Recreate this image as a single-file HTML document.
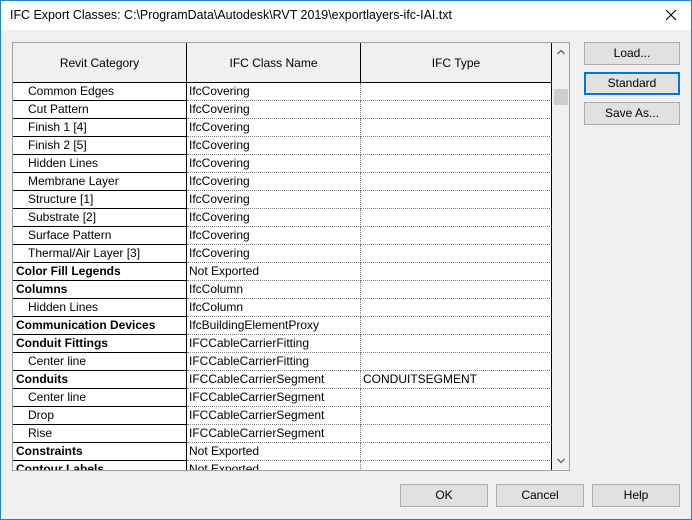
<!DOCTYPE html>
<html><head><meta charset="utf-8"><style>
*{margin:0;padding:0;box-sizing:border-box}
body{width:692px;height:520px;overflow:hidden;font-family:"Liberation Sans",Tahoma,sans-serif;font-size:12px;color:#000;background:#f0f0f0;position:relative}
.frame{position:absolute;left:0;top:0;width:692px;height:520px;border:1px solid #1883d7;}
.title{position:absolute;left:1px;top:1px;width:690px;height:29px;background:#fff;}
.title span{position:absolute;left:9px;top:7px;font-size:12.45px}
.close{position:absolute;left:662px;top:6px;width:16px;height:16px}
.grid{position:absolute;left:12px;top:42px;width:558px;height:429px;border:1px solid #a0a0a0;background:#fff;overflow:hidden}
.hdr{position:absolute;top:0;height:40px;border-right:1px solid #000;border-bottom:1px solid #000;background:#f0f0f0;text-align:center;line-height:40px}
.row{position:absolute;left:0;height:18px;width:539px}
.c{position:absolute;top:0;height:18px;line-height:17px;white-space:nowrap;overflow:hidden}
.c1{left:0;width:174px;background:#fff;border-bottom:1px solid #000;border-right:1px solid #000;padding-left:3px}
.c1.sub{padding-left:15px}
.c1.b{font-weight:bold}
.c2{left:174px;width:174px;border-bottom:1px dotted #808080;border-right:1px dotted #808080;padding-left:2px}
.c3{left:348px;width:191px;border-bottom:1px dotted #808080;border-right:1px solid #000;padding-left:2px}
.sb{position:absolute;left:539px;top:0;width:18px;height:427px;background:#f0f0f0}
.thumb{position:absolute;left:2px;top:46px;width:14px;height:16px;background:#cdcdcd}
.btn{position:absolute;height:23px;background:#e1e1e1;border:1px solid #adadad;text-align:center;line-height:21px}
.btn.f{border:2px solid #0078d7;line-height:19px}
</style></head><body>
<div class="frame"></div>
<div class="title"><span>IFC Export Classes: C:\ProgramData\Autodesk\RVT 2019\exportlayers-ifc-IAI.txt</span>
<svg class="close" viewBox="0 0 16 16"><path d="M3 3L13 13M13 3L3 13" stroke="#000" stroke-width="1.1"/></svg></div>
<div class="grid">
<div class="hdr" style="left:0;width:174px">Revit Category</div>
<div class="hdr" style="left:174px;width:174px">IFC Class Name</div>
<div class="hdr" style="left:348px;width:191px">IFC Type</div>
<div class="row" style="top:40px"><div class="c c1 sub">Common Edges</div><div class="c c2">IfcCovering</div><div class="c c3"></div></div>
<div class="row" style="top:58px"><div class="c c1 sub">Cut Pattern</div><div class="c c2">IfcCovering</div><div class="c c3"></div></div>
<div class="row" style="top:76px"><div class="c c1 sub">Finish 1 [4]</div><div class="c c2">IfcCovering</div><div class="c c3"></div></div>
<div class="row" style="top:94px"><div class="c c1 sub">Finish 2 [5]</div><div class="c c2">IfcCovering</div><div class="c c3"></div></div>
<div class="row" style="top:112px"><div class="c c1 sub">Hidden Lines</div><div class="c c2">IfcCovering</div><div class="c c3"></div></div>
<div class="row" style="top:130px"><div class="c c1 sub">Membrane Layer</div><div class="c c2">IfcCovering</div><div class="c c3"></div></div>
<div class="row" style="top:148px"><div class="c c1 sub">Structure [1]</div><div class="c c2">IfcCovering</div><div class="c c3"></div></div>
<div class="row" style="top:166px"><div class="c c1 sub">Substrate [2]</div><div class="c c2">IfcCovering</div><div class="c c3"></div></div>
<div class="row" style="top:184px"><div class="c c1 sub">Surface Pattern</div><div class="c c2">IfcCovering</div><div class="c c3"></div></div>
<div class="row" style="top:202px"><div class="c c1 sub">Thermal/Air Layer [3]</div><div class="c c2">IfcCovering</div><div class="c c3"></div></div>
<div class="row" style="top:220px"><div class="c c1 b">Color Fill Legends</div><div class="c c2">Not Exported</div><div class="c c3"></div></div>
<div class="row" style="top:238px"><div class="c c1 b">Columns</div><div class="c c2">IfcColumn</div><div class="c c3"></div></div>
<div class="row" style="top:256px"><div class="c c1 sub">Hidden Lines</div><div class="c c2">IfcColumn</div><div class="c c3"></div></div>
<div class="row" style="top:274px"><div class="c c1 b">Communication Devices</div><div class="c c2">IfcBuildingElementProxy</div><div class="c c3"></div></div>
<div class="row" style="top:292px"><div class="c c1 b">Conduit Fittings</div><div class="c c2">IFCCableCarrierFitting</div><div class="c c3"></div></div>
<div class="row" style="top:310px"><div class="c c1 sub">Center line</div><div class="c c2">IFCCableCarrierFitting</div><div class="c c3"></div></div>
<div class="row" style="top:328px"><div class="c c1 b">Conduits</div><div class="c c2">IFCCableCarrierSegment</div><div class="c c3">CONDUITSEGMENT</div></div>
<div class="row" style="top:346px"><div class="c c1 sub">Center line</div><div class="c c2">IFCCableCarrierSegment</div><div class="c c3"></div></div>
<div class="row" style="top:364px"><div class="c c1 sub">Drop</div><div class="c c2">IFCCableCarrierSegment</div><div class="c c3"></div></div>
<div class="row" style="top:382px"><div class="c c1 sub">Rise</div><div class="c c2">IFCCableCarrierSegment</div><div class="c c3"></div></div>
<div class="row" style="top:400px"><div class="c c1 b">Constraints</div><div class="c c2">Not Exported</div><div class="c c3"></div></div>
<div class="row" style="top:418px"><div class="c c1 b">Contour Labels</div><div class="c c2">Not Exported</div><div class="c c3"></div></div>
<div class="sb"><svg style="position:absolute;left:4px;top:5px" width="10" height="8" viewBox="0 0 10 8"><path d="M1.5 6L5 2.5L8.5 6" fill="none" stroke="#606060" stroke-width="1.3"/></svg>
<div class="thumb"></div>
<svg style="position:absolute;left:4px;top:414px" width="10" height="8" viewBox="0 0 10 8"><path d="M1.5 2L5 5.5L8.5 2" fill="none" stroke="#606060" stroke-width="1.3"/></svg></div>
</div>
<div class="btn" style="left:584px;top:42px;width:96px">Load...</div>
<div class="btn f" style="left:584px;top:72px;width:96px">Standard</div>
<div class="btn" style="left:584px;top:102px;width:96px">Save As...</div>
<div class="btn" style="left:400px;top:484px;width:88px">OK</div>
<div class="btn" style="left:496px;top:484px;width:88px">Cancel</div>
<div class="btn" style="left:592px;top:484px;width:88px">Help</div>
</body></html>
